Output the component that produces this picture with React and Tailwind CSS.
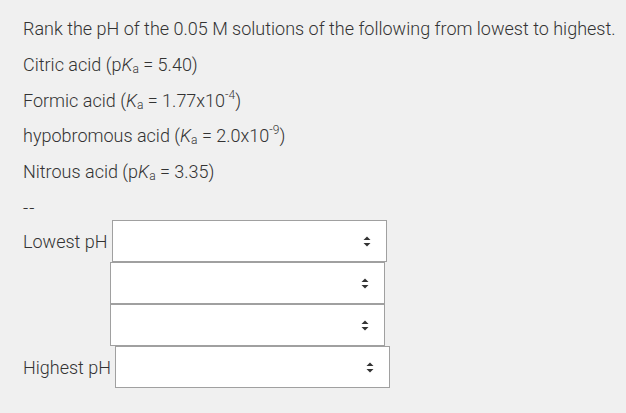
import React from "react";

function Arrows() {
  return (
    <svg width="8" height="11" viewBox="0 0 8 11" className="block">
      <path d="M4 0.5 L7.5 4 L0.5 4 Z" fill="#333" />
      <path d="M4 10.5 L7.5 7 L0.5 7 Z" fill="#333" />
    </svg>
  );
}

function Select() {
  return (
    <div className="h-[42px] w-[275px] bg-white border border-[#a0a0a0] flex items-center justify-end pr-[15px]">
      <Arrows />
    </div>
  );
}

const Ka = ({ p }) => (
  <>
    {p ? "p" : ""}
    <i>K</i>
    <sub className="text-[12px] relative top-[2px] align-baseline">a</sub>
  </>
);

const Sup = ({ children }) => (
  <sup className="text-[12px] align-baseline relative top-[-8px]">{children}</sup>
);

export default function App() {
  return (
    <div
      className="w-[626px] h-[413px] bg-[#f0f0f0] text-[#333] font-light text-[18px] pl-[23px] pt-[16px]"
      style={{ fontFamily: "Roboto, 'Noto Sans', sans-serif" }}
    >
      <div className="leading-[26px]">Rank the pH of the 0.05 M solutions of the following from lowest to highest.</div>
      <div className="leading-[26px] mt-[10px]">Citric acid (<Ka p /> = 5.40)</div>
      <div className="leading-[26px] mt-[10px]">Formic acid (<Ka /> = 1.77x10<Sup>-4</Sup>)</div>
      <div className="leading-[26px] mt-[9px]">hypobromous acid (<Ka /> = 2.0x10<Sup>-9</Sup>)</div>
      <div className="leading-[26px] mt-[10px]">Nitrous acid (<Ka p /> = 3.35)</div>
      <div className="leading-[26px] mt-[10px] tracking-[1px]">--</div>
      <div className="flex flex-col mt-[-1px]">
        <div className="flex items-center">
          <span className="w-[89px]">Lowest pH</span>
          <Select />
        </div>
        <div className="flex items-center">
          <span className="w-[87px]"></span>
          <Select />
        </div>
        <div className="flex items-center">
          <span className="w-[87px]"></span>
          <Select />
        </div>
        <div className="flex items-center">
          <span className="w-[92px]">Highest pH</span>
          <Select />
        </div>
      </div>
    </div>
  );
}
